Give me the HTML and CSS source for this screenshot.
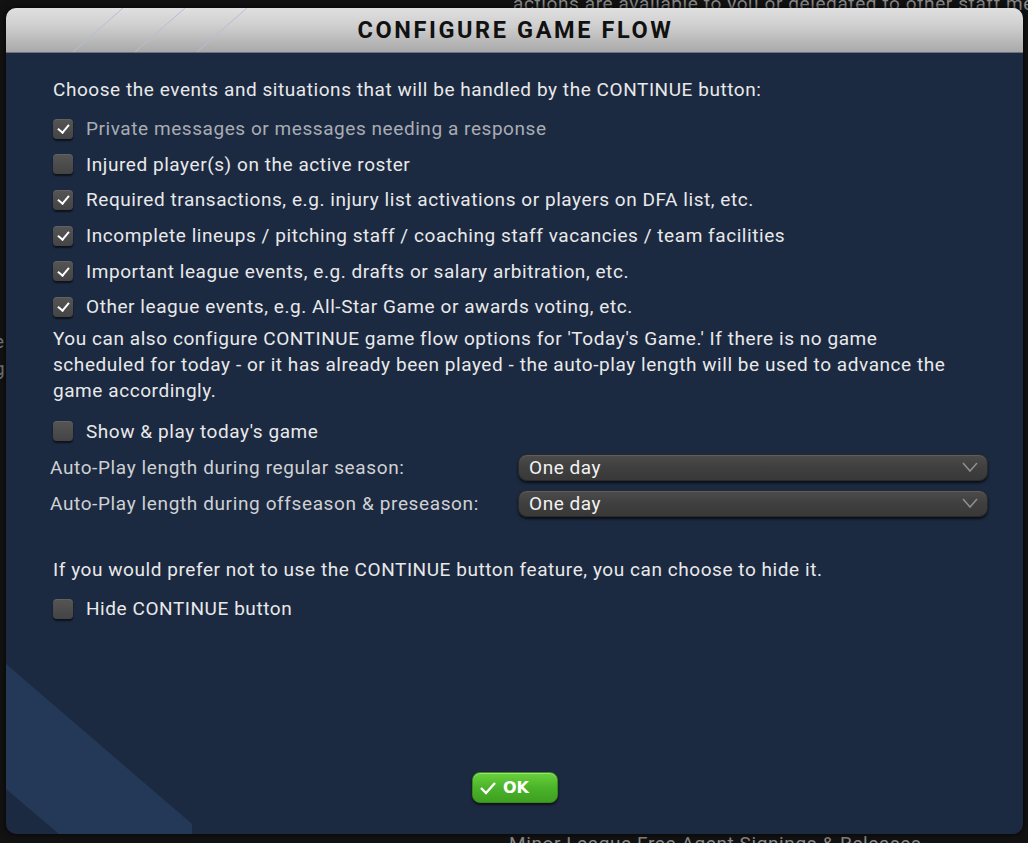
FILE: index.html
```html
<!DOCTYPE html>
<html>
<head>
<meta charset="utf-8">
<link rel="stylesheet" href="styles.css">
</head>
<body>
<div class="backdrop">
  <div class="bg-top">actions are available to you or delegated to other staff me</div>
  <div class="bg-left"><span>e</span><span>g</span></div>
  <div class="bg-bottom">Minor League Free Agent Signings &amp; Releases</div>
</div>
<div class="dialog">
  <div class="titlebar">
    <svg class="title-lines" width="260" height="44" viewBox="0 0 260 44">
      <line x1="67" y1="44" x2="117" y2="0" />
      <line x1="129" y1="44" x2="179" y2="0" />
      <line x1="191" y1="44" x2="241" y2="0" />
    </svg>
    <h1 class="title">CONFIGURE GAME FLOW</h1>
  </div>
  <div class="body">
    <svg class="stripe" width="200" height="170" viewBox="0 0 200 170">
      <polygon points="0,0 186,160 186,170 53,170 0,125" />
    </svg>
    <p class="intro">Choose the events and situations that will be handled by the CONTINUE button:</p>
    <ul class="checks">
      <li class="row dim"><span class="cb on"></span>Private messages or messages needing a response</li>
      <li class="row"><span class="cb"></span>Injured player(s) on the active roster</li>
      <li class="row"><span class="cb on"></span>Required transactions, e.g. injury list activations or players on DFA list, etc.</li>
      <li class="row"><span class="cb on"></span>Incomplete lineups / pitching staff / coaching staff vacancies / team facilities</li>
      <li class="row"><span class="cb on"></span>Important league events, e.g. drafts or salary arbitration, etc.</li>
      <li class="row"><span class="cb on"></span>Other league events, e.g. All-Star Game or awards voting, etc.</li>
    </ul>
    <p class="para">You can also configure CONTINUE game flow options for 'Today's Game.' If there is no game scheduled for today - or it has already been played - the auto-play length will be used to advance the game accordingly.</p>
    <div class="row show"><span class="cb"></span>Show &amp; play today's game</div>
    <div class="field">
      <span class="flabel">Auto-Play length during regular season:</span>
      <div class="select"><span>One day</span><svg class="chev" width="16" height="10" viewBox="0 0 16 10"><polyline points="1,1 8,9 15,1"/></svg></div>
    </div>
    <div class="field">
      <span class="flabel">Auto-Play length during offseason &amp; preseason:</span>
      <div class="select"><span>One day</span><svg class="chev" width="16" height="10" viewBox="0 0 16 10"><polyline points="1,1 8,9 15,1"/></svg></div>
    </div>
    <p class="intro hide-note">If you would prefer not to use the CONTINUE button feature, you can choose to hide it.</p>
    <div class="row hide-row"><span class="cb"></span>Hide CONTINUE button</div>
    <div class="footer">
      <button class="ok"><svg width="18" height="14" viewBox="0 0 18 14"><polyline points="2,7 7,12 16,2"/></svg><span>OK</span></button>
    </div>
  </div>
</div>
</body>
</html>
```
FILE: styles.css
```css
* { box-sizing: border-box; }
html, body { margin: 0; padding: 0; }
body {
  width: 1028px;
  height: 843px;
  background: #121212;
  font-family: Roboto, "Noto Sans", Arial, sans-serif;
  overflow: hidden;
  position: relative;
}
.backdrop {
  height: 843px;
  display: flex;
  flex-direction: column;
  justify-content: space-between;
  color: #8a8a8a;
  font-size: 19px;
  letter-spacing: 0.6px;
}
.bg-top {
  margin-top: -8px;
  padding-left: 513px;
  white-space: nowrap;
}
.bg-left {
  position: absolute;
  left: -6px;
  top: 328px;
  display: flex;
  flex-direction: column;
  line-height: 27px;
  font-size: 19px;
  color: #777;
}
.bg-bottom {
  padding-left: 509px;
  margin-bottom: -12px;
  white-space: nowrap;
}
.dialog {
  position: absolute;
  left: 6px;
  top: 8px;
  width: 1017px;
  height: 826px;
  border-radius: 10px;
  overflow: hidden;
  background: #1c2a41;
  box-shadow: 0 0 6px rgba(0,0,0,0.8);
  display: flex;
  flex-direction: column;
}
.titlebar {
  position: relative;
  height: 45px;
  flex: none;
  background: linear-gradient(#e0e0e0, #cfcfcf 40%, #a9a9a9);
  border-bottom: 1px solid #6f7480;
  display: flex;
  align-items: center;
  justify-content: center;
}
.title-lines {
  position: absolute;
  left: 0;
  top: 0;
}
.title-lines line {
  stroke: #b7bcd6;
  stroke-width: 1;
}
.title {
  margin: 0;
  font-size: 23.5px;
  font-weight: 700;
  color: #111;
  letter-spacing: 2.6px;
  padding-left: 2px;
}
.body {
  position: relative;
  flex: 1;
  display: flex;
  flex-direction: column;
  padding: 24px 58px 31px 47px;
  color: #e9e9ea;
  font-size: 19px;
  letter-spacing: 0.56px;
}
.stripe {
  position: absolute;
  left: 0;
  bottom: 0;
}
.stripe polygon { fill: #273d5c; opacity: 0.8; }
.intro {
  margin: 0;
  line-height: 26px;
  white-space: nowrap;
}
.checks {
  list-style: none;
  margin: 8px 0 0 0;
  padding: 0;
}
.row {
  position: relative;
  display: flex;
  align-items: center;
  height: 35.6px;
  white-space: nowrap;
}
.row.dim { color: #a9adb4; }
.cb {
  width: 20px;
  height: 20px;
  flex: none;
  margin-right: 13px;
  border-radius: 4px;
  background: linear-gradient(#555, #444);
  box-shadow: 0 2px 2px rgba(0,0,0,0.6), inset 0 1px 0 rgba(255,255,255,0.08);
  position: relative;
}
.cb.on::after {
  content: "";
  position: absolute;
  left: 7px;
  top: 3.5px;
  width: 5px;
  height: 9px;
  border: solid #fff;
  border-width: 0 2.3px 2.3px 0;
  transform: rotate(40deg);
}
.para {
  margin: 1px 0 0 0;
  line-height: 26px;
}
.show { margin-top: 10px; }
.field {
  display: flex;
  align-items: center;
  height: 36px;
  margin-left: -3px;
}
.flabel {
  width: 468px;
  flex: none;
  color: #cfd1d4;
  white-space: nowrap;
  letter-spacing: 0.62px;
}
.select {
  width: 470px;
  flex: none;
  height: 27px;
  border-radius: 9px;
  background: linear-gradient(#4c4c4c, #3f3f3f 50%, #393939);
  border: 1px solid #2a2a2a;
  box-shadow: 0 2px 3px rgba(0,0,0,0.7), inset 0 1px 0 rgba(255,255,255,0.1);
  display: flex;
  align-items: center;
  justify-content: space-between;
  padding: 0 9px 0 10px;
  color: #f2f2f2;
}
.chev polyline {
  fill: none;
  stroke: #8e8e8e;
  stroke-width: 1.6;
}
.hide-note { margin-top: 36px; }
.hide-row { margin-top: 8px; }
.footer {
  margin-top: auto;
  display: flex;
  justify-content: center;
  padding-left: 12px;
}
.ok {
  width: 86px;
  height: 31px;
  border-radius: 8px;
  border: 1px solid #3a8a1c;
  background: linear-gradient(#6ad03b, #4bb42a 50%, #3e9f20);
  box-shadow: 0 2px 3px rgba(0,0,0,0.6), inset 0 1px 0 rgba(255,255,255,0.35);
  display: flex;
  align-items: center;
  padding: 0 0 0 6px;
  color: #fff;
  font-family: "DejaVu Sans", sans-serif;
  font-weight: 700;
  font-size: 16px;
  letter-spacing: 0;
  gap: 6px;
  cursor: pointer;
}
.ok svg polyline {
  fill: none;
  stroke: #fff;
  stroke-width: 2.4;
}
```
